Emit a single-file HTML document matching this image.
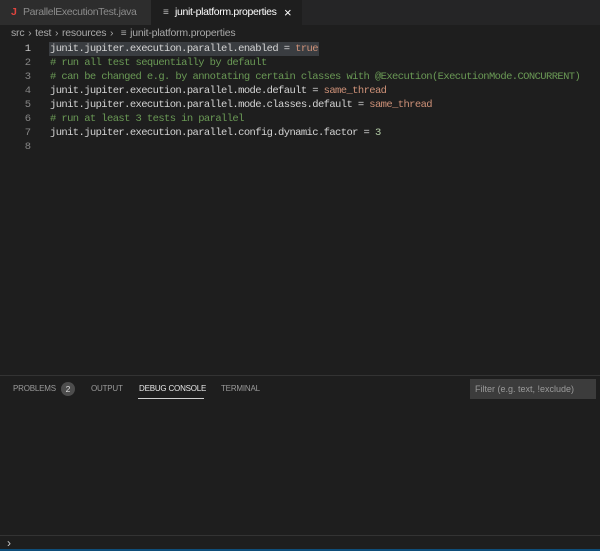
<!DOCTYPE html>
<html><head><style>
*{margin:0;padding:0;box-sizing:border-box}
body{width:600px;height:550px;background:#1e1e1e;font-family:"Liberation Sans",sans-serif;position:relative;overflow:hidden;color:#ccc}
.tabs{position:absolute;left:0;top:0;width:600px;height:25px;background:#252526}
.tab{position:absolute;top:0;height:25px;font-size:10.5px;line-height:25px;letter-spacing:-0.35px}
.t1{left:0;width:151px;background:#2d2d2d;color:#8b8b8b}
.t2{left:151px;width:151px;background:#1e1e1e;color:#fff}
.crumb{position:absolute;left:11px;top:26px;font-size:10.5px;color:#a9a9a9;line-height:15px;letter-spacing:-0.2px;word-spacing:1px}
.code{position:absolute;top:42px;left:0;font-family:"Liberation Mono",monospace;font-size:10.5px;line-height:14px;letter-spacing:-0.6px}
.ln{position:absolute;left:0;width:31px;text-align:right;color:#858585;letter-spacing:0}
.tx{position:absolute;left:50px;white-space:pre;color:#d4d4d4}
.c{color:#6a9955}.s{color:#ce9178}.n{color:#b5cea8}
.panel{position:absolute;left:0;top:375px;width:600px;height:175px;background:#1e1e1e;border-top:1px solid #333}
.pt{position:absolute;top:7px;font-size:8px;color:#9a9a9a;line-height:12px;letter-spacing:-0.2px}
</style></head><body>
<div class="tabs">
<div class="tab t1"><span style="position:absolute;left:11px;color:#e0443e;font-weight:bold">J</span><span style="position:absolute;left:23px">ParallelExecutionTest.java</span></div>
<div class="tab t2"><span style="position:absolute;left:12px;color:#bbb;font-size:10px">&#8801;</span><span style="position:absolute;left:24px">junit-platform.properties</span><span style="position:absolute;left:133px;font-size:13px">&#215;</span></div>
</div>
<div class="crumb">src &#8250; test &#8250; resources &#8250; &nbsp;<span style="font-size:10px">&#8801;</span> junit-platform.properties</div>
<div class="code">
<div style="position:absolute;top:0;left:49px;width:270px;height:14px;background:#3a3d41"></div>
<div class="ln" style="top:0;color:#c6c6c6">1</div><div class="tx" style="top:0">junit.jupiter.execution.parallel.enabled = <span class="s">true</span></div>
<div class="ln" style="top:14px">2</div><div class="tx c" style="top:14px"># run all test sequentially by default</div>
<div class="ln" style="top:28px">3</div><div class="tx c" style="top:28px"># can be changed e.g. by annotating certain classes with @Execution(ExecutionMode.CONCURRENT)</div>
<div class="ln" style="top:42px">4</div><div class="tx" style="top:42px">junit.jupiter.execution.parallel.mode.default = <span class="s">same_thread</span></div>
<div class="ln" style="top:56px">5</div><div class="tx" style="top:56px">junit.jupiter.execution.parallel.mode.classes.default = <span class="s">same_thread</span></div>
<div class="ln" style="top:70px">6</div><div class="tx c" style="top:70px"># run at least 3 tests in parallel</div>
<div class="ln" style="top:84px">7</div><div class="tx" style="top:84px">junit.jupiter.execution.parallel.config.dynamic.factor = <span class="n">3</span></div>
<div class="ln" style="top:98px">8</div>
</div>
<div class="panel">
<div class="pt" style="left:13px">PROBLEMS</div>
<div style="position:absolute;left:61px;top:6px;width:14px;height:14px;border-radius:7px;background:#4d4d4d;color:#ddd;font-size:8.5px;text-align:center;line-height:14px">2</div>
<div class="pt" style="left:91px">OUTPUT</div>
<div class="pt" style="left:139px;color:#e7e7e7">DEBUG CONSOLE</div>
<div style="position:absolute;left:138px;top:22px;width:66px;height:1px;background:#d0d0d0"></div>
<div class="pt" style="left:221px">TERMINAL</div>
<div style="position:absolute;left:470px;top:3px;width:126px;height:20px;background:#3c3c3c;font-size:9px;color:#9a9a9a;line-height:20px;padding-left:5px">Filter (e.g. text, !exclude)</div>
<div style="position:absolute;left:0;top:159px;width:600px;height:1px;background:#333"></div>
<div style="position:absolute;left:7px;top:160px;font-size:12px;color:#ccc">&#8250;</div>
<div style="position:absolute;left:0;top:173px;width:600px;height:2px;background:#0e4e7a"></div>
</div>
</body></html>
